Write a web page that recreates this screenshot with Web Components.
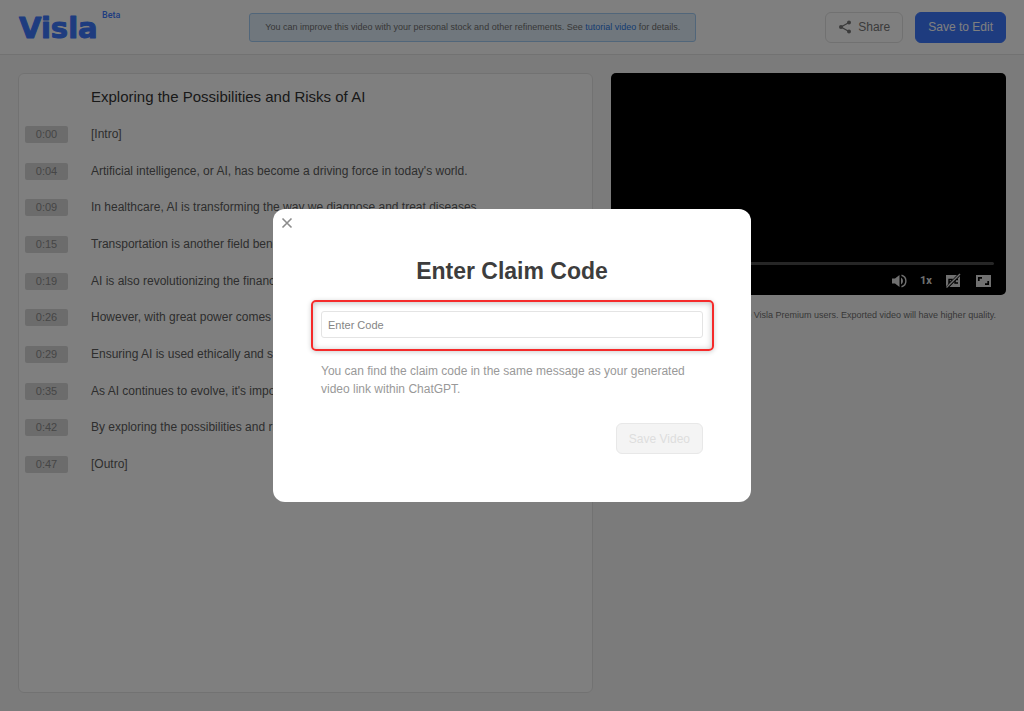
<!DOCTYPE html>
<html lang="en">
<head>
<meta charset="utf-8">
<meta name="viewport" content="width=device-width, initial-scale=1">
<title>Visla</title>
<style>
  body { margin: 0; font-family: "Liberation Sans", Arial, sans-serif; font-size: 12px; color: #5c5c5c; background: #f7f7f7; }
</style>
</head>
<body>
<visla-app></visla-app>
<script>
const define = (name, html, init) => customElements.define(name, class extends HTMLElement {
  constructor() {
    super();
    const template = document.createElement('template');
    template.innerHTML = html;
    this.attachShadow({ mode: 'open' }).append(template.content.cloneNode(true));
    if (init) init.call(this, this.shadowRoot);
  }
});

define('visla-logo', `
  <style>
    :host { display: flex; align-items: flex-start; gap: 2px; color: #3d78ff; line-height: 1; }
    svg { display: block; overflow: visible; }
    .name { font: bold 29px "DejaVu Sans", sans-serif; fill: currentColor; stroke: currentColor; stroke-width: 1; stroke-linejoin: round; }
    .beta { font: 500 9px/12px Roboto, sans-serif; }
  </style>
  <svg width="82" height="32" role="img" aria-label="Visla"><text class="name" x="1" y="29">Visla</text></svg><span class="beta">Beta</span>`);

define('visla-banner', `
  <style>
    :host { display: block; padding: 0 15px; border: 1px solid #a3cdf5; border-radius: 3px; background: #e1effa; font-size: 9px; line-height: 27px; color: #707070; }
    ::slotted(a) { color: #2b78e4; text-decoration: none; }
  </style>
  <slot></slot>`);

define('visla-button', `
  <style>
    :host { display: block; }
    button { display: flex; align-items: center; gap: 6px; box-sizing: border-box; height: 31px; padding: 0 12px; border: 1px solid #e2e2e2; border-radius: 6px; background: #fff; color: #777; font: inherit; white-space: nowrap; }
    :host([primary]) button { border-color: #3d78ff; background: #3d78ff; color: #fff; }
    button:disabled { background: #f4f4f4; border-color: #e8e8e8; color: #dedede; }
  </style>
  <button type="button"><slot name="icon"></slot><slot></slot></button>`,
  function (root) { root.querySelector('button').disabled = this.hasAttribute('disabled'); });

define('visla-header', `
  <style>
    :host { display: flex; justify-content: space-between; align-items: center; box-sizing: border-box; height: 55px; padding: 0 18px; border-bottom: 1px solid #e5e5e5; background: #fff; }
    visla-logo { align-self: flex-start; padding-top: 9px; }
    .actions { display: flex; gap: 12px; }
    svg { display: block; }
  </style>
  <visla-logo></visla-logo>
  <visla-banner>You can improve this video with your personal stock and other refinements. See <a href="#tutorial">tutorial video</a> for details.</visla-banner>
  <div class="actions">
    <visla-button>
      <svg slot="icon" width="14" height="14" viewBox="0 0 14 14" fill="#777" aria-hidden="true"><path d="M11 2.500 3 7l8 4.500" fill="none" stroke="#777" stroke-width="1.300"/><circle cx="11" cy="2.500" r="2"/><circle cx="3" cy="7" r="2"/><circle cx="11" cy="11.500" r="2"/></svg>Share
    </visla-button>
    <visla-button primary>Save to Edit</visla-button>
  </div>`);

define('script-line', `
  <style>
    :host { display: grid; grid-template-columns: 43px 1fr; column-gap: 23px; align-items: center; line-height: 17px; }
    time { border-radius: 2px; background: #d9d9d9; color: #8c8c8c; font-size: 11px; text-align: center; }
  </style>
  <time></time><span><slot></slot></span>`,
  function (root) { root.querySelector('time').textContent = this.getAttribute('at'); });

define('script-panel', `
  <style>
    :host { display: block; box-sizing: border-box; padding: 13px 6px; border: 1px solid #e5e5e5; border-radius: 6px; background: #fff; }
    h1 { margin: 0 0 19px 66px; font-size: 15px; line-height: 20px; font-weight: normal; color: #333; }
    .lines { display: flex; flex-direction: column; justify-content: space-between; min-height: 347px; }
  </style>
  <h1>Exploring the Possibilities and Risks of AI</h1>
  <div class="lines">
    <script-line at="0:00">[Intro]</script-line>
    <script-line at="0:04">Artificial intelligence, or AI, has become a driving force in today's world.</script-line>
    <script-line at="0:09">In healthcare, AI is transforming the way we diagnose and treat diseases.</script-line>
    <script-line at="0:15">Transportation is another field benefiting.</script-line>
    <script-line at="0:19">AI is also revolutionizing the finance</script-line>
    <script-line at="0:26">However, with great power comes</script-line>
    <script-line at="0:29">Ensuring AI is used ethically and safely</script-line>
    <script-line at="0:35">As AI continues to evolve, it's important</script-line>
    <script-line at="0:42">By exploring the possibilities and risks</script-line>
    <script-line at="0:47">[Outro]</script-line>
  </div>`);

define('video-player', `
  <style>
    :host { display: block; }
    .screen { display: flex; flex-direction: column; justify-content: flex-end; box-sizing: border-box; aspect-ratio: 16 / 9; padding: 0 12px 5px; border-radius: 5px; background: #000; color: #e0e0e0; }
    .track { height: 3px; border-radius: 2px; background: #4c4c4c; }
    .controls { display: flex; justify-content: flex-end; align-items: center; gap: 13px; height: 18px; padding: 7px 2px 0; }
    button { display: flex; padding: 0; border: 0; background: none; color: inherit; font: bold 11px/16px Roboto, sans-serif; }
    p { margin: 12px 10px 0; font-size: 9px; line-height: 16px; text-align: right; white-space: nowrap; color: #707070; }
  </style>
  <div class="screen">
    <div class="track"></div>
    <div class="controls">
      <button type="button" aria-label="Volume"><svg width="16" height="16" viewBox="0 0 16 16" fill="currentColor"><path d="M1 5.500h3L8.500 2v12L4 10.500H1z"/><path d="M10 4.500q2 1.200 2 3.500t-2 3.500z"/><path d="M10.500 2.300a5.900 5.900 0 0 1 0 11.400" fill="none" stroke="currentColor" stroke-width="1.400"/></svg></button>
      <button type="button">1x</button>
      <button type="button" aria-label="Captions off"><svg width="18" height="16" viewBox="0 0 18 16"><path fill="currentColor" d="M1 2h14v12H1z"/><path d="M4 12V6.500h3V9H4M13 6.500H10V10h3" fill="none" stroke="#000" stroke-width="1.400"/><path d="M1 15.500 15 1" stroke="#000" stroke-width="3"/><path d="M1.500 14.500 15 1" stroke="currentColor" stroke-width="1.400"/></svg></button>
      <button type="button" aria-label="Full screen"><svg width="16" height="16" viewBox="0 0 16 16"><path fill="currentColor" d="M0 2h15v12H0z"/><path d="M2.800 8V4.800H6M12.200 8v3.200H9" fill="none" stroke="#000" stroke-width="1.700"/></svg></button>
    </div>
  </div>
  <p>Only available to Visla Premium users. Exported video will have higher quality.</p>`);

define('claim-dialog', `
  <style>
    :host { position: fixed; inset: 0; display: flex; align-items: center; justify-content: center; background: rgba(0, 0, 0, .5); }
    .dialog { position: relative; box-sizing: border-box; width: 478px; max-width: 100%; padding: 48px; border-radius: 12px; background: #fff; color: #999; }
    .close { position: absolute; top: 8px; left: 8px; display: flex; padding: 0; border: 0; background: none; }
    h2 { margin: 0 0 25px; text-align: center; font-size: 23px; line-height: 29px; color: #3d3d3d; }
    .field { position: relative; }
    .field::after { content: ""; position: absolute; inset: -11px -11px -13px -10px; border: 2px solid #f52a2a; border-radius: 5px; box-shadow: 0 1px 5px rgba(0, 0, 0, .2), inset 0 1px 6px rgba(0, 0, 0, .25); pointer-events: none; }
    input { display: block; box-sizing: border-box; width: 100%; height: 27px; padding: 0 6px; border: 1px solid #e4e4e4; border-radius: 3px; background: #fff; font: inherit; font-size: 11px; color: #333; }
    input::placeholder { color: #858585; opacity: 1; }
    p { margin: 24px 0 25px; line-height: 18px; }
    .actions { display: flex; justify-content: flex-end; }
  </style>
  <div class="dialog" role="dialog" aria-modal="true" aria-labelledby="title">
    <button class="close" type="button" aria-label="Close"><svg width="12" height="12" viewBox="0 0 12 12"><path d="m1.500 1.500 9 9m0-9-9 9" stroke="#8c8c8c" stroke-width="1.600"/></svg></button>
    <h2 id="title">Enter Claim Code</h2>
    <div class="field"><input type="text" placeholder="Enter Code" aria-labelledby="title" aria-describedby="hint"></div>
    <p id="hint">You can find the claim code in the same message as your generated video link within ChatGPT.</p>
    <div class="actions"><visla-button disabled>Save Video</visla-button></div>
  </div>`);

define('visla-app', `
  <style>
    :host { display: flex; flex-direction: column; min-height: 100vh; }
    main { flex: 1; display: grid; grid-template-columns: 35fr 24fr; gap: 18px; padding: 18px; }
    video-player { min-width: 0; }
  </style>
  <visla-header></visla-header>
  <main><script-panel></script-panel><video-player></video-player></main>
  <claim-dialog></claim-dialog>`);
</script>
</body>
</html>
